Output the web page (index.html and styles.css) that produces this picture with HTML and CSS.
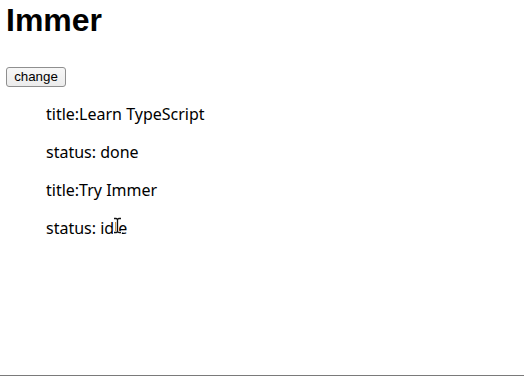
FILE: index.html
```html
<!DOCTYPE html>
<html lang="en">
<head>
<meta charset="utf-8">
<title>Immer</title>
<link rel="stylesheet" href="styles.css">
</head>
<body>
  <h1 class="title">Immer</h1>
  <div class="toolbar">
    <button class="btn" type="button">change</button>
  </div>
  <ul class="todo-list">
    <li class="todo">
      <p class="field">title:Learn TypeScript</p>
      <p class="field">status: done</p>
    </li>
    <li class="todo">
      <p class="field">title:Try Immer</p>
      <p class="field status-idle">status: idle
        <svg class="cursor" width="9" height="17" viewBox="0 0 9 17" aria-hidden="true">
          <path d="M1 1.5 H3 Q4.5 1.5 4.5 3 Q4.5 1.5 6 1.5 H8 M4.5 3 V14 M1 15.5 H3 Q4.5 15.5 4.5 14 Q4.5 15.5 6 15.5 H8" fill="none" stroke="#fff" stroke-width="2.8" stroke-linecap="round"/>
          <path d="M1 1.5 H3 Q4.5 1.5 4.5 3 Q4.5 1.5 6 1.5 H8 M4.5 3 V14 M1 15.5 H3 Q4.5 15.5 4.5 14 Q4.5 15.5 6 15.5 H8" fill="none" stroke="#111" stroke-width="1.3"/>
        </svg>
      </p>
    </li>
  </ul>
</body>
</html>
```

FILE: styles.css
```css
html {
  height: 100%;
}

body {
  margin: 0;
  padding: 0 6px;
  min-height: 100%;
  box-sizing: border-box;
  border-bottom: 1px solid #7a7a7a;
  background: #fff;
  color: #000;
  font-family: "Liberation Sans", Arial, sans-serif;
}

.title {
  margin: 0;
  font-size: 32px;
  font-weight: bold;
  line-height: 40px;
}

.toolbar {
  display: flex;
  margin-top: 27px;
}

.btn {
  box-sizing: border-box;
  height: 20px;
  width: 60px;
  padding: 0 6px;
  border: 1px solid #8f8f8f;
  border-radius: 3px;
  background: linear-gradient(#f7f7f7, #ececec);
  color: #000;
  font-family: "Liberation Sans", Arial, sans-serif;
  font-size: 13.33px;
  line-height: 18px;
}

.todo-list {
  list-style: none;
  margin: 16px 0 0;
  padding: 0 0 0 40px;
  display: flex;
  flex-direction: column;
  gap: 16px;
}

.todo {
  display: flex;
  flex-direction: column;
  gap: 16px;
}

.field {
  margin: 0;
  font-family: "Noto Sans", "Liberation Sans", Arial, sans-serif;
  font-size: 16px;
  line-height: 22px;
}

.status-idle {
  position: relative;
}

.cursor {
  position: absolute;
  left: 67px;
  top: 0;
}
```
